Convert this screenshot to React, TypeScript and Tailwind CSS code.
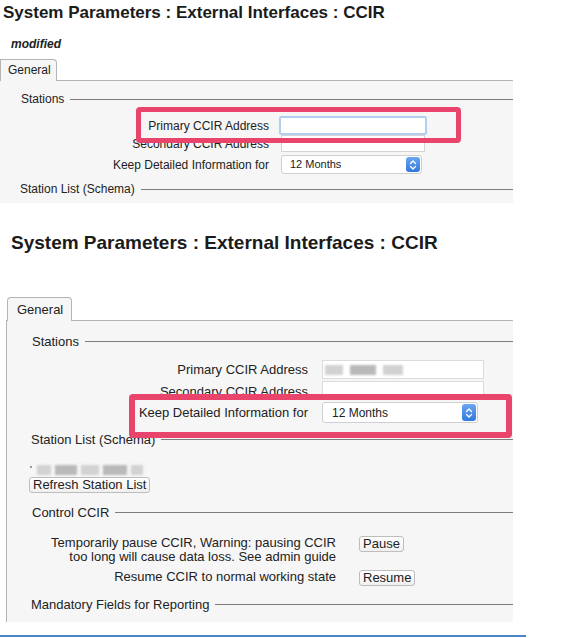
import React from "react";

const Stepper = () => (
  <div className="w-[14px] self-stretch my-[1px] mr-[1px] rounded-[3px] bg-gradient-to-b from-[#6aa6f0] to-[#2f78e0] flex items-center justify-center">
    <svg width="8" height="12" viewBox="0 0 8 12" fill="none" stroke="white" strokeWidth="1.4" strokeLinecap="round" strokeLinejoin="round">
      <path d="M1.5 4.5 L4 2 L6.5 4.5" />
      <path d="M1.5 7.5 L4 10 L6.5 7.5" />
    </svg>
  </div>
);

const Section = ({ label, className }: { label: string; className: string }) => (
  <div className={`flex items-center ${className}`}>
    <span className="whitespace-nowrap">{label}</span>
    <div className="flex-1 h-px bg-[#7d7d7d] ml-[6px]" />
  </div>
);

const Blur = ({ widths, className }: { widths: number[]; className: string }) => (
  <div className={`flex items-center gap-[4px] blur-[1.2px] ${className}`}>
    {widths.map((w, i) => (
      <div key={i} className={i % 2 ? "h-[10px] bg-[#b9b9b9]" : "h-[10px] bg-[#d2d2d2]"} style={{ width: w }} />
    ))}
  </div>
);

const MacButton = ({ children }: { children: React.ReactNode }) => (
  <div className="h-[16px] px-[3px] border border-[#bdbdbd] rounded-[3px] bg-gradient-to-b from-white to-[#f0f0f0] text-[13px] leading-[14px] text-[#222] whitespace-nowrap">
    {children}
  </div>
);

const TopShot = () => (
  <div className="h-[203px] text-[12px] text-[#222]">
    <h1 className="pt-[3px] pl-[3px] text-[17px] leading-[20px] font-bold text-[#1b1b1b]">
      System Parameters : External Interfaces : CCIR
    </h1>
    <p className="mt-[14px] pl-[11px] leading-[14px] font-bold italic">modified</p>
    <div className="relative z-10 mt-[8px] w-[57px] h-[22px] -mb-px border border-b-0 border-[#b4b4b4] rounded-tr-[4px] bg-[#f6f6f6] pl-[7px] leading-[21px]">
      General
    </div>
    <div className="w-[513px] h-[123px] bg-[#f6f6f6] border-t border-[#b4b4b4]">
      <Section label="Stations" className="pt-[11px] pl-[21px] h-[25px] leading-[14px]" />
      <div className="mt-[10px] flex flex-col">
        <div className="flex items-center h-[19px]">
          <div className="w-[269px] text-right">Primary CCIR Address</div>
          <div className="ml-[10px] w-[148px] h-[19px] bg-white border-2 border-[#b3cff0] rounded-[2px]" />
        </div>
        <div className="flex items-start h-[17px]">
          <div className="w-[269px] text-right leading-[14px] mt-[2px]">Secondary CCIR Address</div>
          <div className="ml-[12px] w-[144px] h-[17px] bg-white border border-[#d4d4d4]" />
        </div>
        <div className="mt-[3px] flex items-center h-[19px]">
          <div className="w-[269px] text-right">Keep Detailed Information for</div>
          <div className="ml-[12px] w-[141px] h-[19px] bg-white border border-[#cfcfcf] rounded-[3px] flex items-center">
            <span className="flex-1 pl-[8px] text-[11px]">12 Months</span>
            <Stepper />
          </div>
        </div>
      </div>
      <Section label="Station List (Schema)" className="mt-[8px] pl-[20px] h-[14px] leading-[14px]" />
    </div>
  </div>
);

const BottomShot = () => (
  <div className="text-[13px] text-[#222]">
    <h1 className="mt-[29px] pl-[11px] text-[19px] leading-[22px] font-bold text-[#1b1b1b]">
      System Parameters : External Interfaces : CCIR
    </h1>
    <div className="relative z-10 mt-[43px] ml-[7px] w-[65px] h-[24px] -mb-px border border-b-0 border-[#b4b4b4] rounded-t-[4px] bg-[#f6f6f6] pl-[9px] leading-[23px]">
      General
    </div>
    <div className="ml-[6px] w-[507px] h-[302px] bg-[#f6f6f6] border-t border-l border-[#b4b4b4]">
      <Section label="Stations" className="pt-[13px] pl-[25px] h-[28px] leading-[15px]" />
      <div className="mt-[11px] flex flex-col gap-[2px]">
        <div className="flex items-center h-[19px]">
          <div className="w-[301px] text-right">Primary CCIR Address</div>
          <div className="ml-[14px] w-[162px] h-[19px] bg-white border border-[#dcdcdc] flex items-center">
            <Blur widths={[18, 26, 20]} className="ml-[2px] gap-[7px]" />
          </div>
        </div>
        <div className="flex items-center h-[19px]">
          <div className="w-[301px] text-right mt-[2px]">Secondary CCIR Address</div>
          <div className="ml-[14px] w-[162px] h-[19px] bg-white border border-[#dcdcdc]" />
        </div>
        <div className="flex items-center h-[21px]">
          <div className="w-[301px] text-right">Keep Detailed Information for</div>
          <div className="ml-[14px] w-[156px] h-[21px] bg-white border border-[#cfcfcf] rounded-[3px] flex items-center">
            <span className="flex-1 pl-[9px] text-[12px]">12 Months</span>
            <Stepper />
          </div>
        </div>
      </div>
      <Section label="Station List (Schema)" className="mt-[9px] pl-[24px] h-[15px] leading-[15px]" />
      <div className="mt-[15px] ml-[23px] h-[15px] flex items-center">
        <div className="w-[2px] h-[2px] bg-[#999] mr-[5px] mb-[6px]" />
        <Blur widths={[14, 22, 18, 24, 12]} className="gap-[3px]" />
      </div>
      <div className="ml-[22px] flex">
        <MacButton>Refresh Station List</MacButton>
      </div>
      <Section label="Control CCIR" className="mt-[12px] pl-[25px] h-[15px] leading-[15px]" />
      <div className="mt-[16px] flex items-start">
        <div className="w-[329px] text-right leading-[14px]">
          Temporarily pause CCIR, Warning: pausing CCIR
          <br />
          too long will cause data loss. See admin guide
        </div>
        <div className="ml-[23px] flex">
          <MacButton>Pause</MacButton>
        </div>
      </div>
      <div className="mt-[4px] h-[17px] flex items-center">
        <div className="w-[329px] text-right leading-[14px]">Resume CCIR to normal working state</div>
        <div className="ml-[23px] mt-[2px] flex">
          <MacButton>Resume</MacButton>
        </div>
      </div>
      <Section label="Mandatory Fields for Reporting" className="mt-[12px] pl-[24px] h-[15px] leading-[15px]" />
    </div>
    <div className="mt-[13px] w-[526px] h-[2px] bg-[#4a86c8]" />
  </div>
);

export default function App() {
  return (
    <div className="relative w-[564px] h-[638px] bg-white overflow-hidden font-['Liberation_Sans',Arial,sans-serif]">
      <TopShot />
      <BottomShot />
      {/* annotation boxes drawn over the screenshots */}
      <div className="absolute left-[136px] top-[107px] w-[325px] h-[36px] border-[5px] border-[#e8446c] rounded-[4px] z-20" />
      <div className="absolute left-[129px] top-[394px] w-[383px] h-[44px] border-[6px] border-[#e8446c] rounded-[4px] z-20" />
    </div>
  );
}
